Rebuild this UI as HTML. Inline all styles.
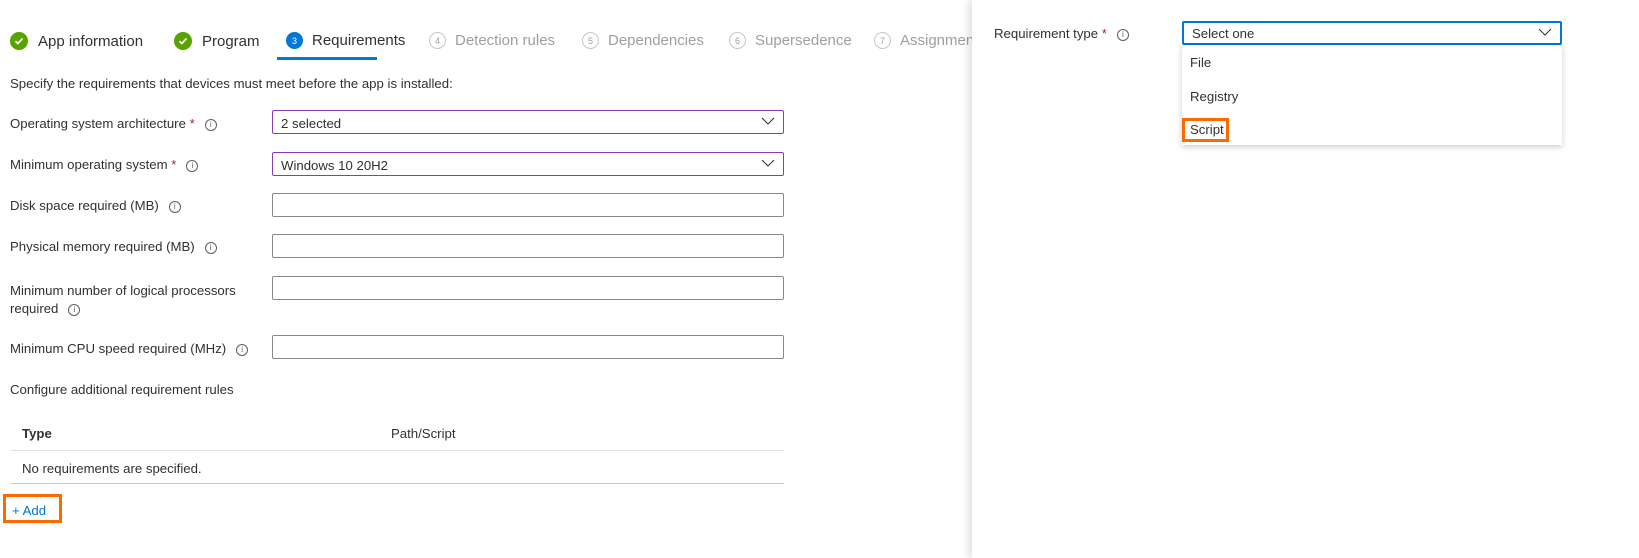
<!DOCTYPE html>
<html><head><style>
*{box-sizing:border-box;margin:0;padding:0}
body{width:1639px;height:558px;overflow:hidden;background:#fff;font-family:"Liberation Sans",sans-serif;font-size:13.2px;color:#323130;position:relative}
.a{position:absolute;white-space:nowrap}
.step{position:absolute;top:32px;font-size:15px;display:flex;align-items:center}
.chk{width:18px;height:18px;border-radius:50%;background:#57a300;display:inline-flex;align-items:center;justify-content:center;margin-right:10px}
.num{width:17px;height:17px;border-radius:50%;border:1px solid #c8c6c4;color:#a19f9d;font-size:9px;display:inline-flex;align-items:center;justify-content:center;margin-right:9px}
.box{position:absolute;left:272px;width:512px;height:24px;border:1px solid #8a8886;border-radius:2px}
.info{display:inline-block;width:12px;height:12px;border:1px solid #605e5c;border-radius:50%;font-size:8px;text-align:center;line-height:10px;margin-left:10px;vertical-align:1px;color:#605e5c}
.req{color:#a4262c}
.chev{position:absolute;right:8px;top:5px}
</style></head><body>
<div class="step" style="left:10px"><span class="chk"><svg width="10" height="10" viewBox="0 0 10 10"><path d="M1.5 5.2l2.3 2.3L8.5 2.5" stroke="#fff" stroke-width="1.8" fill="none"/></svg></span><span>App information</span></div>
<div class="step" style="left:174px"><span class="chk"><svg width="10" height="10" viewBox="0 0 10 10"><path d="M1.5 5.2l2.3 2.3L8.5 2.5" stroke="#fff" stroke-width="1.8" fill="none"/></svg></span><span>Program</span></div>
<div class="step" style="left:286px"><span class="num" style="background:#0078d4;border-color:#0078d4;color:#fff">3</span><span style="color:#323130">Requirements</span></div>
<div class="a" style="left:277px;top:57px;width:100px;height:3px;background:#0078d4"></div>
<div class="step" style="left:429px;color:#a19f9d"><span class="num">4</span>Detection rules</div>
<div class="step" style="left:582px;color:#a19f9d"><span class="num">5</span>Dependencies</div>
<div class="step" style="left:729px;color:#a19f9d"><span class="num">6</span>Supersedence</div>
<div class="step" style="left:874px;color:#a19f9d"><span class="num">7</span>Assignments</div>

<div class="a" style="left:10px;top:76px">Specify the requirements that devices must meet before the app is installed:</div>

<div class="a" style="left:10px;top:116px">Operating system architecture <span class="req">*</span><span class="info">i</span></div>
<div class="box" style="top:110px;border-color:#8e3ab3;padding:5px 8px">2 selected<svg class="chev" width="14" height="10" viewBox="0 0 14 10"><path d="M1 2l6 6 6-6" stroke="#323130" fill="none"/></svg></div>
<div class="a" style="left:10px;top:157px">Minimum operating system <span class="req">*</span><span class="info">i</span></div>
<div class="box" style="top:152px;border-color:#8e3ab3;padding:5px 8px">Windows 10 20H2<svg class="chev" width="14" height="10" viewBox="0 0 14 10"><path d="M1 2l6 6 6-6" stroke="#323130" fill="none"/></svg></div>
<div class="a" style="left:10px;top:198px">Disk space required (MB)<span class="info">i</span></div>
<div class="box" style="top:193px"></div>
<div class="a" style="left:10px;top:282px;line-height:18px">Minimum number of logical processors<br>required<span class="info">i</span></div>
<div class="a" style="left:10px;top:239px">Physical memory required (MB)<span class="info">i</span></div>
<div class="box" style="top:234px"></div>
<div class="box" style="top:276px"></div>
<div class="a" style="left:10px;top:341px">Minimum CPU speed required (MHz)<span class="info">i</span></div>
<div class="box" style="top:335px"></div>
<div class="a" style="left:10px;top:382px">Configure additional requirement rules</div>
<div class="a" style="left:22px;top:426px;font-weight:bold">Type</div>
<div class="a" style="left:391px;top:426px">Path/Script</div>
<div class="a" style="left:11px;top:450px;width:773px;height:1px;background:#e1dfdd"></div>
<div class="a" style="left:22px;top:461px">No requirements are specified.</div>
<div class="a" style="left:11px;top:483px;width:773px;height:1px;background:#c8c6c4"></div>
<div class="a" style="left:3px;top:494px;width:59px;height:29px;border:3px solid #ff6a00"></div>
<div class="a" style="left:12px;top:503px;color:#0078d4">+ Add</div>

<div class="a" style="left:972px;top:0;width:667px;height:558px;background:#fff;box-shadow:-4px 0 8px rgba(0,0,0,.12)"></div>
<div class="a" style="left:994px;top:26px">Requirement type <span class="req">*</span><span class="info">i</span></div>
<div class="a" style="left:1182px;top:21px;width:380px;height:24px;border:2px solid #0078d4;border-radius:2px;padding:3px 8px;color:#323130">Select one<svg class="chev" style="top:4px" width="14" height="10" viewBox="0 0 14 10"><path d="M1 2l6 6 6-6" stroke="#323130" fill="none"/></svg></div>
<div class="a" style="left:1182px;top:45px;width:380px;height:100px;background:#fff;box-shadow:0 2px 6px rgba(0,0,0,.2)"></div>
<div class="a" style="left:1190px;top:55px">File</div>
<div class="a" style="left:1190px;top:89px">Registry</div>
<div class="a" style="left:1182px;top:118px;width:47px;height:24px;border:3px solid #ff6a00"></div>
<div class="a" style="left:1190px;top:122px">Script</div>
</body></html>
